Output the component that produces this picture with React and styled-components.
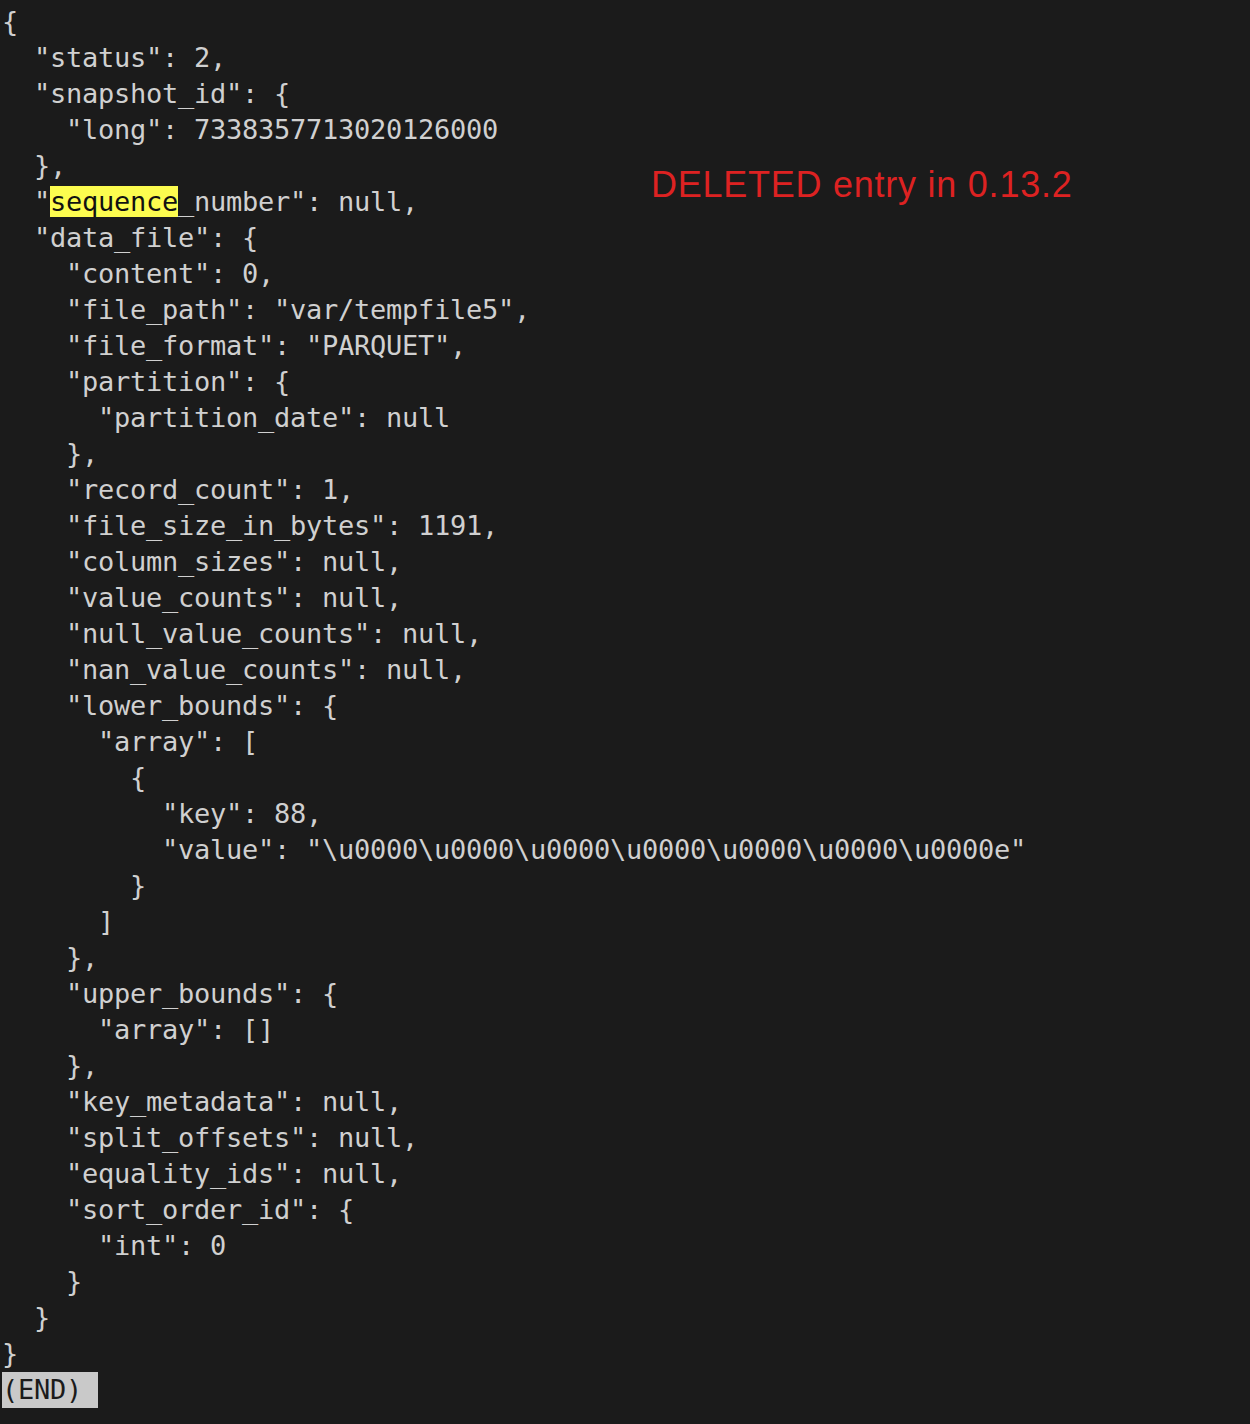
import React from "react";
import styled, { createGlobalStyle } from "styled-components";

const Global = createGlobalStyle`
  html, body {
    margin: 0;
    padding: 0;
    background: #1b1b1b;
  }
  body {
    min-height: 1424px;
  }
`;

const Terminal = styled.div`
  position: relative;
  min-height: 1424px;
  box-sizing: border-box;
  padding: 4px 0 0 2px;
  background: #1b1b1b;
  color: #d0d0d0;
  font-family: "DejaVu Sans Mono", "Liberation Mono", monospace;
  font-size: 27px;
  letter-spacing: -0.255px;
  line-height: 36px;
`;

const Line = styled.div`
  height: 36px;
  white-space: pre;
`;

const Highlight = styled.span`
  background: #fcfc4f;
  color: #111;
`;

const EndMarker = styled.span`
  background: #c9c9c9;
  color: #1b1b1b;
  display: inline-block;
  height: 36px;
`;

const Annotation = styled.div`
  position: absolute;
  left: 651px;
  top: 163px;
  color: #dd2222;
  font-family: "Liberation Sans", Arial, sans-serif;
  font-size: 36px;
  line-height: 44px;
  letter-spacing: 0.75px;
  white-space: nowrap;
`;

const lines = [
  "{",
  '  "status": 2,',
  '  "snapshot_id": {',
  '    "long": 7338357713020126000',
  "  },",
  null,
  '  "data_file": {',
  '    "content": 0,',
  '    "file_path": "var/tempfile5",',
  '    "file_format": "PARQUET",',
  '    "partition": {',
  '      "partition_date": null',
  "    },",
  '    "record_count": 1,',
  '    "file_size_in_bytes": 1191,',
  '    "column_sizes": null,',
  '    "value_counts": null,',
  '    "null_value_counts": null,',
  '    "nan_value_counts": null,',
  '    "lower_bounds": {',
  '      "array": [',
  "        {",
  '          "key": 88,',
  '          "value": "\\u0000\\u0000\\u0000\\u0000\\u0000\\u0000\\u0000e"',
  "        }",
  "      ]",
  "    },",
  '    "upper_bounds": {',
  '      "array": []',
  "    },",
  '    "key_metadata": null,',
  '    "split_offsets": null,',
  '    "equality_ids": null,',
  '    "sort_order_id": {',
  '      "int": 0',
  "    }",
  "  }",
  "}",
];

export default function App() {
  return (
    <>
      <Global />
      <Terminal>
        {lines.map((l, i) =>
          l === null ? (
            <Line key={i}>
              {'  "'}
              <Highlight>sequence</Highlight>
              {'_number": null,'}
            </Line>
          ) : (
            <Line key={i}>{l}</Line>
          )
        )}
        <Line>
          <EndMarker>{"(END) "}</EndMarker>
        </Line>
        <Annotation>DELETED entry in 0.13.2</Annotation>
      </Terminal>
    </>
  );
}
